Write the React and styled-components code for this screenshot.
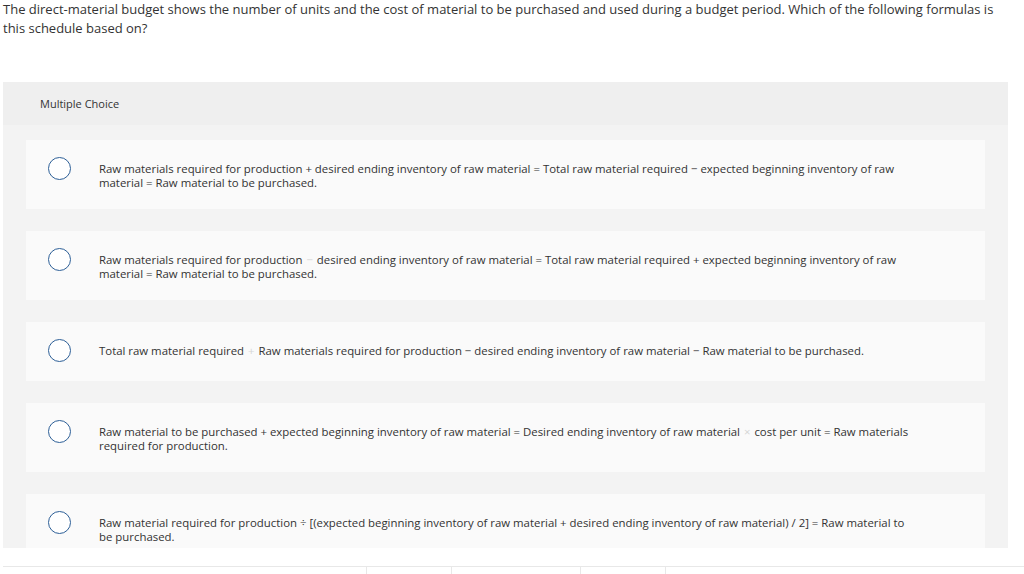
import React from 'react'
import styled, { createGlobalStyle } from 'styled-components'

const GlobalStyle = createGlobalStyle`
  html, body {
    margin: 0;
    padding: 0;
    background: #ffffff;
  }
  body {
    font-family: "Open Sans", Lato, "Liberation Sans", sans-serif;
    color: #333333;
    overflow: hidden;
  }
`

const Page = styled.div`
  width: 1024px;
  height: 574px;
  overflow: hidden;
  padding: 0 0 0 3px;
  box-sizing: border-box;
`

const Question = styled.p`
  margin: 0 0 44px 0;
  font-size: 13px;
  line-height: 19px;
  color: #333333;
  width: 1010px;
`

const Panel = styled.div`
  width: 1005px;
  height: 466px;
  overflow: hidden;
  background: #f3f3f3;
`

const PanelHeader = styled.div`
  height: 43px;
  display: flex;
  align-items: center;
  padding-left: 37px;
  background: #efefef;
  font-size: 11px;
  color: #333333;
`

const Choices = styled.div`
  display: flex;
  flex-direction: column;
  gap: 22px;
  padding: 15px 23px 0 23px;
`

const Choice = styled.div`
  display: flex;
  align-items: flex-start;
  background: #fafafa;
  padding: 17px 70px 19px 22px;
`

const Radio = styled.span`
  flex: none;
  width: 21px;
  height: 21px;
  border: 1.5px solid #2d5f97;
  border-radius: 50%;
  background: #ffffff;
  margin-right: 28px;
`

const ChoiceText = styled.div`
  padding-top: 5px;
  font-size: 11.4px;
  line-height: 14px;
  color: #333333;
`

const Faint = styled.span`
  color: #d6d6d6;
  padding: 0 1px;
`

const Footer = styled.div`
  margin-top: 18px;
  border-top: 1px solid #e8e8e8;
  height: 10px;
  position: relative;
  width: 1021px;
`

const Divider = styled.span`
  position: absolute;
  top: 0;
  width: 1px;
  height: 10px;
  background: #e8e8e8;
`

const choices = [
  <>Raw materials required for production + desired ending inventory of raw material = Total raw material required − expected beginning inventory of raw material = Raw material to be purchased.</>,
  <>Raw materials required for production <Faint>−</Faint> desired ending inventory of raw material = Total raw material required + expected beginning inventory of raw material = Raw material to be purchased.</>,
  <>Total raw material required <Faint>+</Faint> Raw materials required for production − desired ending inventory of raw material − Raw material to be purchased.</>,
  <>Raw material to be purchased + expected beginning inventory of raw material = Desired ending inventory of raw material <Faint>×</Faint> cost per unit = Raw materials required for production.</>,
  <>Raw material required for production ÷ [(expected beginning inventory of raw material + desired ending inventory of raw material) / 2] = Raw material to be purchased.</>,
]

const App = () => (
  <Page>
    <GlobalStyle />
    <Question>
      The direct-material budget shows the number of units and the cost of material to be purchased and used during a budget period. Which of the following formulas is this schedule based on?
    </Question>
    <Panel>
      <PanelHeader>Multiple Choice</PanelHeader>
      <Choices>
        {choices.map((c, i) => (
          <Choice key={i}>
            <Radio />
            <ChoiceText>{c}</ChoiceText>
          </Choice>
        ))}
      </Choices>
    </Panel>
    <Footer>
      {[363, 448, 577, 662].map((x) => (
        <Divider key={x} style={{ left: x }} />
      ))}
    </Footer>
  </Page>
)

export default App
